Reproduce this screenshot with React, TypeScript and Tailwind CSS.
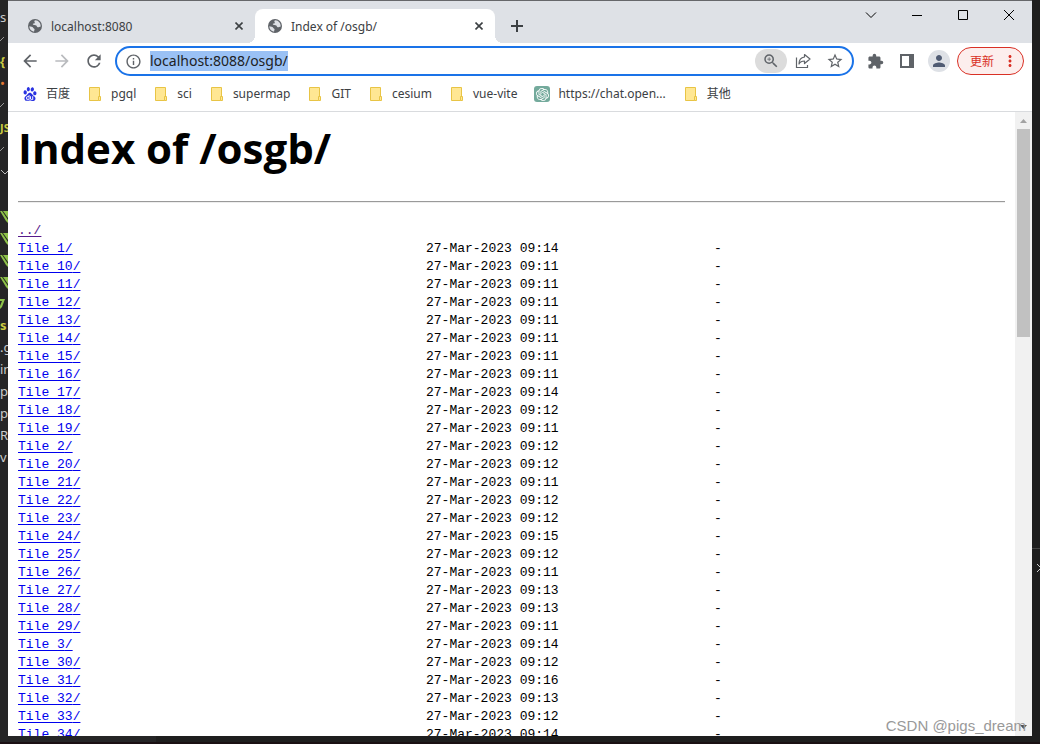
import { useEffect, useRef } from "react";
import {
  MdArrowBack,
  MdArrowForward,
  MdRefresh,
  MdInfoOutline,
  MdZoomIn,
  MdStarBorder,
  MdExtension,
  MdPerson,
  MdMoreVert,
} from "react-icons/md";
import { SiBaidu, SiOpenai } from "react-icons/si";

const tiles = [
  ["1", "09:14"],
  ["10", "09:11"],
  ["11", "09:11"],
  ["12", "09:11"],
  ["13", "09:11"],
  ["14", "09:11"],
  ["15", "09:11"],
  ["16", "09:11"],
  ["17", "09:14"],
  ["18", "09:12"],
  ["19", "09:11"],
  ["2", "09:12"],
  ["20", "09:12"],
  ["21", "09:11"],
  ["22", "09:12"],
  ["23", "09:12"],
  ["24", "09:15"],
  ["25", "09:12"],
  ["26", "09:11"],
  ["27", "09:13"],
  ["28", "09:13"],
  ["29", "09:11"],
  ["3", "09:14"],
  ["30", "09:12"],
  ["31", "09:16"],
  ["32", "09:13"],
  ["33", "09:12"],
  ["34", "09:14"],
];

const bookmarks = [
  { label: "百度", icon: "baidu" },
  { label: "pgql", icon: "folder" },
  { label: "sci", icon: "folder" },
  { label: "supermap", icon: "folder" },
  { label: "GIT", icon: "folder" },
  { label: "cesium", icon: "folder" },
  { label: "vue-vite", icon: "folder" },
  { label: "https://chat.open...", icon: "openai" },
  { label: "其他", icon: "folder" },
];

const editorRows = [
  { text: "s", color: "text-[#cccccc]" },
  { text: "check" },
  { text: "{", color: "text-[#cbcb41] font-bold" },
  { text: "•", color: "text-[#e37933]" },
  { text: "check" },
  { text: "JS", color: "text-[#cbcb41] font-bold text-[11px]" },
  { text: "check" },
  { text: "chevron" },
  { text: "" },
  { text: "vue" },
  { text: "vue" },
  { text: "vue" },
  { text: "vue" },
  { text: "sass" },
  { text: "s", color: "text-[#cbcb41] font-bold" },
  { text: ".g", color: "text-[#cccccc]" },
  { text: "in", color: "text-[#cccccc]" },
  { text: "p", color: "text-[#cccccc]" },
  { text: "p", color: "text-[#cccccc]" },
  { text: "R", color: "text-[#cccccc]" },
  { text: "v", color: "text-[#cccccc]" },
];

const EditorGlyph = ({ text }: { text: string }) => {
  if (text === "vue") {
    return (
      <svg width="8" height="14" viewBox="0 0 8 14">
        <path d="M0 2h2l6 9v3L6 12z" fill="#8dc149" />
        <path d="M3 2h5v7z" fill="#8dc149" />
      </svg>
    );
  }
  if (text === "sass") {
    return (
      <svg width="8" height="14" viewBox="0 0 8 14">
        <path d="M0 2h5L2 10l-2 2V9l2-5H0z" fill="#8dc149" />
      </svg>
    );
  }
  if (text === "check") {
    return (
      <svg width="8" height="8" viewBox="0 0 8 8" fill="none" stroke="#9a9a9a">
        <path d="M-2 3l2 2 4-4" />
      </svg>
    );
  }
  if (text === "chevron") {
    return (
      <svg width="8" height="8" viewBox="0 0 8 8" fill="none" stroke="#bdbdbd">
        <path d="M1 2l4 4 4-4" />
      </svg>
    );
  }
  return <>{text}</>;
};

const GlobeIcon = () => (
  <svg width="16" height="16" viewBox="0 0 16 16">
    <circle cx="8" cy="8" r="7" fill="#5f6368" />
    <path
      d="M8.500 2.300c-1.300.2-1.400 1.200-.8 2 .5.700-.3 1.200-1.200 1.300-.8.100-.8 1-.2 1.200 1.500.3 3.200.2 3.500 1.500.2 1 1.500 1.200 2.300.7.700-.4 1.300-.3 1.600-.6.100-3.200-2.200-6-5.200-6.100zM2.300 8.200c1.500.3 3.400.2 3.800 1.500.3.900 1.500.7 1.500 1.700 0 .8-.7 1.200-.5 2.300C4.300 13.300 2.300 11 2.300 8.200z"
      fill="#dee1e6"
    />
  </svg>
);

const BookmarkIcon = ({ icon }: { icon: string }) => {
  if (icon === "baidu") return <SiBaidu size={14} className="text-[#2932e1]" />;
  if (icon === "openai") {
    return (
      <span className="flex size-4 items-center justify-center rounded-[3px] bg-[#74aa9c] text-white">
        <SiOpenai size={13} />
      </span>
    );
  }
  return (
    <svg width="16" height="16" viewBox="0 0 16 16">
      <path d="M2.500 1.500h10v10h-1v3h-9z" fill="#ffe793" stroke="#e8c445" />
      <path d="M11.500 10.500h2v4h-2z" fill="#ffe793" stroke="#e8c445" />
    </svg>
  );
};

const Tab = ({ title, active }: { title: string; active?: boolean }) => (
  <div
    className={
      active
        ? "relative flex h-[34px] w-60 items-center rounded-t-lg bg-white pr-2 pl-3"
        : "flex h-[34px] w-60 items-center pr-2 pl-3"
    }
  >
    {active && (
      <>
        <span className="absolute bottom-0 -left-2 size-2 bg-[radial-gradient(circle_at_0_0,#dee1e6_8px,#ffffff_8px)]" />
        <span className="absolute -right-2 bottom-0 size-2 bg-[radial-gradient(circle_at_100%_0,#dee1e6_8px,#ffffff_8px)]" />
      </>
    )}
    <GlobeIcon />
    <button className="ml-2 flex-1 pt-px text-left text-xs text-[#3c4043]">{title}</button>
    <button aria-label="关闭标签页" className="flex size-4 items-center justify-center">
      <svg width="8" height="8" viewBox="0 0 8 8" stroke="#3c4043" strokeWidth="1.6">
        <path d="M0.5 0.5l7 7M7.5 0.5l-7 7" />
      </svg>
    </button>
  </div>
);

const WindowControls = () => (
  <div className="flex h-7 text-black">
    <button aria-label="搜索标签页" className="flex w-[46px] items-center justify-center">
      <svg width="12" height="8" viewBox="0 0 12 8" fill="none" stroke="currentColor">
        <path d="M1 1.500l5 5 5-5" />
      </svg>
    </button>
    <button aria-label="最小化" className="flex w-[46px] items-center justify-center">
      <svg width="10" height="2" viewBox="0 0 10 2">
        <path d="M0 1h10v1H0z" fill="currentColor" />
      </svg>
    </button>
    <button aria-label="最大化" className="flex w-[46px] items-center justify-center">
      <svg width="10" height="10" viewBox="0 0 10 10" fill="none" stroke="currentColor">
        <path d="M0.5 0.5h9v9h-9z" />
      </svg>
    </button>
    <button aria-label="关闭" className="flex w-[46px] items-center justify-center">
      <svg width="10" height="10" viewBox="0 0 10 10" stroke="currentColor">
        <path d="M0 0l10 10M10 0L0 10" />
      </svg>
    </button>
  </div>
);

const Toolbar = () => {
  const addressRef = useRef<HTMLInputElement>(null);

  useEffect(() => {
    addressRef.current?.focus();
    addressRef.current?.select();
  }, []);

  return (
    <div className="flex h-9 items-center pr-2 pl-[6px] text-[#5f6368]">
      <button aria-label="后退" className="flex w-8 justify-center">
        <MdArrowBack size={20} />
      </button>
      <button aria-label="前进" className="flex w-8 justify-center text-[#b9bbbe]">
        <MdArrowForward size={20} />
      </button>
      <button aria-label="重新加载" className="flex w-8 justify-center">
        <MdRefresh size={20} />
      </button>
      <div className="mx-[5px] flex h-[30px] flex-1 items-center rounded-full border-2 border-[#1a73e8] pr-px pl-2">
        <MdInfoOutline size={17} />
        <input
          ref={addressRef}
          type="text"
          aria-label="地址和搜索栏"
          defaultValue="localhost:8088/osgb/"
          className="ml-2 h-5 min-w-0 flex-1 text-sm leading-5 text-[#202124] outline-none selection:bg-[#9ac1f5] selection:text-[#202124]"
        />
        <button aria-label="缩放" className="flex h-6 w-8 items-center justify-center rounded-full bg-[#dcdcdc]">
          <MdZoomIn size={18} />
        </button>
        <button aria-label="分享" className="flex w-8 justify-center">
          <svg width="16" height="16" viewBox="0 0 16 16" fill="none" stroke="currentColor" strokeWidth="1.2">
            <path d="M1.500 4.500v10h11V12" />
            <path d="M9.500 1.500L15 6l-5.500 4.500V8C7 8 5 9 4 11c0-4 2-6.500 5.500-7z" strokeLinejoin="round" />
          </svg>
        </button>
        <button aria-label="为此标签页添加书签" className="flex w-8 justify-center">
          <MdStarBorder size={18} />
        </button>
      </div>
      <button aria-label="扩展程序" className="flex w-8 justify-center">
        <MdExtension size={17} />
      </button>
      <button aria-label="侧边栏" className="flex w-8 justify-center">
        <svg width="14" height="14" viewBox="0 0 14 14">
          <path d="M0 0h14v14H0zM2 2v10h7V2z" fill="currentColor" fillRule="evenodd" />
        </svg>
      </button>
      <button aria-label="个人资料" className="flex w-8 justify-center">
        <span className="flex size-[22px] items-center justify-center rounded-full bg-[#dee1e6] text-[#4f5b73]">
          <MdPerson size={18} />
        </span>
      </button>
      <button className="ml-[2px] flex h-7 w-[67px] items-center justify-between rounded-full border border-[#d93025] bg-[#fceeed] pr-1 pl-3 text-xs text-[#d93025]">
        <span className="pt-px">更新</span>
        <MdMoreVert size={18} />
      </button>
    </div>
  );
};

const DirectoryIndex = () => (
  <main className="min-h-0 min-w-0 flex-1 overflow-hidden px-[10px] text-black">
    <h1 className="pt-2 font-['Open_Sans','Noto_Sans_CJK_SC',sans-serif] text-[42px] leading-[56px] font-bold">
      Index of /osgb/
    </h1>
    <hr className="mt-[25px] border-t border-b border-t-[#9a9a9a] border-b-[#eeeeee]" />
    <table className="mt-[19px] font-['Liberation_Mono','Noto_Sans_CJK_SC',monospace] text-[13px] leading-[18px]">
      <tbody>
        <tr>
          <td className="w-[408px] p-0">
            <a href="#parent" className="text-[#551a8b] underline underline-offset-2">
              ../
            </a>
          </td>
          <td className="w-[288px] p-0" />
          <td className="p-0" />
        </tr>
        {tiles.map(([name, time]) => (
          <tr key={name}>
            <td className="p-0">
              <a href={`#tile-${name}`} className="text-[#0000ee] underline underline-offset-2">
                Tile {name}/
              </a>
            </td>
            <td className="p-0">27-Mar-2023 {time}</td>
            <td className="p-0">-</td>
          </tr>
        ))}
      </tbody>
    </table>
  </main>
);

const ScrollBar = () => (
  <div className="flex w-[17px] flex-col items-center bg-[#f1f1f1]">
    <svg width="17" height="17" viewBox="0 0 17 17">
      <path d="M5 11h7L8.500 7z" fill="#a3a3a3" />
    </svg>
    <div className="h-1/3 w-[13px] bg-[#c1c1c1]" />
    <svg width="17" height="17" viewBox="0 0 17 17" className="mt-auto">
      <path d="M5 6h7l-3.500 4z" fill="#505050" />
    </svg>
  </div>
);

const App = () => {
  return (
    <div className="relative flex h-screen flex-col overflow-hidden bg-[#1e1e1e] font-['Noto_Sans','Noto_Sans_CJK_SC',sans-serif]">
      <div className="flex min-h-0 flex-1">
        {/* Editor window showing behind the browser */}
        <div className="w-2 overflow-hidden bg-[#252526] pt-[7px] text-[13px]">
          {editorRows.map((row, i) => (
            <div key={i} className={`flex h-[22px] items-center whitespace-nowrap ${row.color ?? ""}`}>
              <EditorGlyph text={row.text} />
            </div>
          ))}
        </div>

        <div className="flex min-w-0 flex-1 flex-col border-t border-[#66676a] bg-white">
          {/* Tab strip */}
          <div className="flex h-[42px] justify-between bg-[#dee1e6]">
            <div className="flex items-end pl-[7px]">
              <Tab title="localhost:8080" />
              <Tab title="Index of /osgb/" active />
              <button aria-label="新标签页" className="ml-2 flex h-[34px] w-7 items-center justify-center">
                <svg width="12" height="12" viewBox="0 0 12 12" fill="#3c4043">
                  <path d="M5 0h2v5h5v2H7v5H5V7H0V5h5z" />
                </svg>
              </button>
            </div>
            <WindowControls />
          </div>

          <Toolbar />

          {/* Bookmarks */}
          <nav className="flex h-[33px] items-center gap-[17px] border-b border-[#d9dbde] pb-[2px] pl-[14px] text-xs whitespace-nowrap text-[#3c4043]">
            {bookmarks.map((bookmark) => (
              <a key={bookmark.label} href="#bookmark" className="flex items-center gap-2">
                <span className="flex w-4 justify-center">
                  <BookmarkIcon icon={bookmark.icon} />
                </span>
                {bookmark.label}
              </a>
            ))}
          </nav>

          <div className="flex min-h-0 flex-1">
            <DirectoryIndex />
            <ScrollBar />
          </div>
        </div>

        <div className="flex w-2 flex-col justify-end overflow-hidden bg-[#1e1e1e]">
          <div className="h-[188px] border-t border-[#444444] pt-[14px]">
            <svg width="8" height="10" viewBox="0 0 8 10" fill="none" stroke="#cccccc">
              <path d="M5 1l4 4-4 4" />
            </svg>
          </div>
        </div>
      </div>
      <div className="flex h-2 border-b-2 border-[#1a1013]">
        <div className="w-39 bg-[#252526]" />
      </div>

      <div className="absolute right-3.5 bottom-2 font-['Liberation_Sans',sans-serif] text-[15px] leading-5 text-[#999999]">
        CSDN @pigs_dream
      </div>
    </div>
  );
};

export default App;
